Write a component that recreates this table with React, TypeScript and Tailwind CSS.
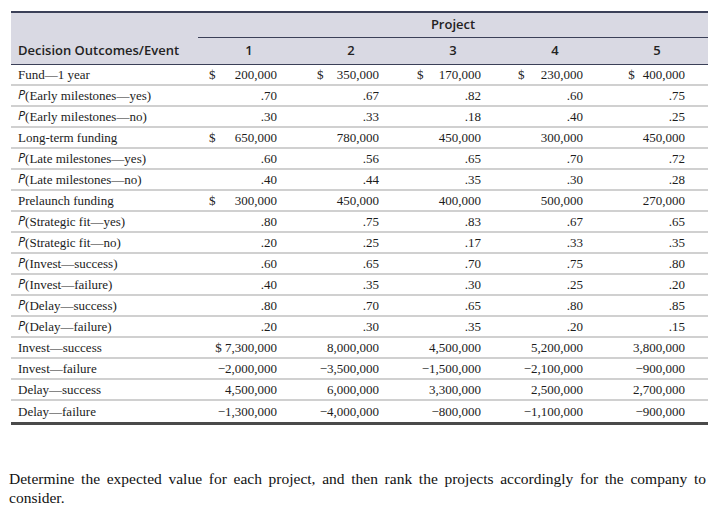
import * as React from "react";

// "$|200,000" = dollar sign at left of the cell, number at right
// "$>400,000" = dollar sign set just before the number
type Row = { label: string; p?: boolean; cells: string[] };

const rows: Row[] = [
  { label: "Fund—1 year", cells: ["$|200,000", "$|350,000", "$|170,000", "$|230,000", "$>400,000"] },
  { label: "(Early milestones—yes)", p: true, cells: [".70", ".67", ".82", ".60", ".75"] },
  { label: "(Early milestones—no)", p: true, cells: [".30", ".33", ".18", ".40", ".25"] },
  { label: "Long-term funding", cells: ["$|650,000", "780,000", "450,000", "300,000", "450,000"] },
  { label: "(Late milestones—yes)", p: true, cells: [".60", ".56", ".65", ".70", ".72"] },
  { label: "(Late milestones—no)", p: true, cells: [".40", ".44", ".35", ".30", ".28"] },
  { label: "Prelaunch funding", cells: ["$|300,000", "450,000", "400,000", "500,000", "270,000"] },
  { label: "(Strategic fit—yes)", p: true, cells: [".80", ".75", ".83", ".67", ".65"] },
  { label: "(Strategic fit—no)", p: true, cells: [".20", ".25", ".17", ".33", ".35"] },
  { label: "(Invest—success)", p: true, cells: [".60", ".65", ".70", ".75", ".80"] },
  { label: "(Invest—failure)", p: true, cells: [".40", ".35", ".30", ".25", ".20"] },
  { label: "(Delay—success)", p: true, cells: [".80", ".70", ".65", ".80", ".85"] },
  { label: "(Delay—failure)", p: true, cells: [".20", ".30", ".35", ".20", ".15"] },
  { label: "Invest—success", cells: ["$ 7,300,000", "8,000,000", "4,500,000", "5,200,000", "3,800,000"] },
  { label: "Invest—failure", cells: ["−2,000,000", "−3,500,000", "−1,500,000", "−2,100,000", "−900,000"] },
  { label: "Delay—success", cells: ["4,500,000", "6,000,000", "3,300,000", "2,500,000", "2,700,000"] },
  { label: "Delay—failure", cells: ["−1,300,000", "−4,000,000", "−800,000", "−1,100,000", "−900,000"] },
];

const dollarPad = ["pl-[11px]", "pl-[17px]", "pl-[15px]", "pl-[14px]", "pl-[14px]"];

const grid = "grid grid-cols-[187px_102px_102px_102px_102px_102px]";

function Cell({ value, col }: { value: string; col: number }) {
  if (value.startsWith("$|")) {
    return (
      <div className={`flex items-center justify-between pr-[23px] ${dollarPad[col]}`}>
        <span>$</span>
        <span>{value.slice(2)}</span>
      </div>
    );
  }
  if (value.startsWith("$>")) {
    return (
      <div className="flex items-center justify-end gap-[8px] pr-[23px]">
        <span>$</span>
        <span>{value.slice(2)}</span>
      </div>
    );
  }
  return <div className="flex items-center justify-end pr-[23px]">{value}</div>;
}

export default function App() {
  return (
    <div className="w-[723px] h-[508px] bg-white overflow-hidden pt-[11px]">
      {/* table */}
      <div className="ml-[11px] w-[697px]">
        <div className="bg-[#d9d9e3] border-t-2 border-[#3b4058] font-['Open_Sans',sans-serif] font-semibold text-[13px] text-[#222]">
          <div className={grid}>
            <div className="h-[25px]" />
            <div className="col-span-5 h-[25px] flex items-center justify-center border-b-[1.5px] border-[#3b4058]">
              Project
            </div>
          </div>
          <div className={`${grid} h-[27px] border-b-[1.5px] border-[#3b4058] items-center`}>
            <div className="pl-[7px]">Decision Outcomes/Event</div>
            {["1", "2", "3", "4", "5"].map((n) => (
              <div key={n} className="text-center">
                {n}
              </div>
            ))}
          </div>
        </div>

        <div className="font-['Liberation_Serif',serif] text-[13px] text-[#1c1c1c] border-b-[3px] border-[#4a4a4a]">
          {rows.map((r, i) => (
            <div
              key={i}
              className={`${grid} h-[21px] ${i < rows.length - 1 ? "border-b-2 border-[#d0d0d0]" : ""}`}
            >
              <div className="flex items-center pl-[7px] whitespace-nowrap">
                {r.p && <span className="font-['Open_Sans',sans-serif] italic text-[12.5px]">P</span>}
                {r.label}
              </div>
              {r.cells.map((c, j) => (
                <Cell key={j} value={c} col={j} />
              ))}
            </div>
          ))}
        </div>
      </div>

      {/* question */}
      <div className="ml-[9px] w-[697px] mt-[44px] font-['Liberation_Serif',serif] text-[15.5px] leading-[19px] text-[#111]">
        <div className="whitespace-nowrap text-justify [text-align-last:justify]">
          Determine the expected value for each project, and then rank the projects accordingly for the company to
        </div>
        <div>consider.</div>
      </div>
    </div>
  );
}
